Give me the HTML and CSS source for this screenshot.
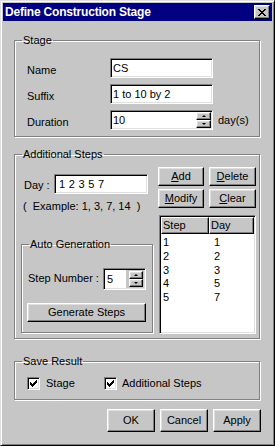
FILE: index.html
```html
<!DOCTYPE html>
<html>
<head>
<meta charset="utf-8">
<title>Define Construction Stage</title>
<link rel="stylesheet" href="styles.css">
</head>
<body>
<div class="window">
  <div class="titlebar">
    <span class="title">Define Construction Stage</span>
    <span class="close-btn raised">
      <svg width="8" height="7" viewBox="0 0 8 7" shape-rendering="crispEdges"><path fill="#000" d="M0 0h2v1H0zM6 0h2v1H6zM1 1h2v1H1zM5 1h2v1H5zM2 2h4v1H2zM3 3h2v1H3zM2 4h4v1H2zM1 5h2v1H1zM5 5h2v1H5zM0 6h2v1H0zM6 6h2v1H6z"/></svg>
    </span>
  </div>
  <div class="content">
    <fieldset class="group">
      <legend>Stage</legend>
      <div class="stage-body">
        <span class="lbl">Name</span>
        <div class="edit"><span class="txt">CS</span></div>
        <span></span>
        <span class="lbl">Suffix</span>
        <div class="edit"><span class="txt">1 to 10 by 2</span></div>
        <span></span>
        <span class="lbl">Duration</span>
        <div class="edit"><span class="txt">10</span>
          <div class="spin"><span class="sbtn raised"><i class="up"></i></span><span class="sbtn raised"><i class="down"></i></span></div>
        </div>
        <span class="unit">day(s)</span>
      </div>
    </fieldset>

    <fieldset class="group addl">
      <legend>Additional Steps</legend>
      <div class="add-body">
        <div class="left-col">
          <div class="day-row">
            <span class="day-lbl">Day :</span>
            <div class="edit day-edit"><span class="txt wide">1 2 3 5 7</span></div>
          </div>
          <div class="example">(  Example: 1, 3, 7, 14  )</div>
          <fieldset class="group auto">
            <legend>Auto Generation</legend>
            <div class="auto-body">
              <div class="step-row">
                <span class="step-lbl">Step Number :</span>
                <div class="edit small"><span class="txt">5</span>
                  <div class="spin"><span class="sbtn raised"><i class="up"></i></span><span class="sbtn raised"><i class="down"></i></span></div>
                </div>
              </div>
              <div class="btn raised gen">Generate Steps</div>
            </div>
          </fieldset>
        </div>
        <div class="right-col">
          <div class="btn-row">
            <div class="btn raised w46"><u>A</u>dd</div>
            <div class="btn raised w47"><u>D</u>elete</div>
          </div>
          <div class="btn-row">
            <div class="btn raised w46"><u>M</u>odify</div>
            <div class="btn raised w47"><u>C</u>lear</div>
          </div>
          <div class="list">
            <div class="list-head">
              <div class="hcell c1">Step</div>
              <div class="hcell c2">Day</div>
            </div>
            <div class="rows">
              <div class="row"><span class="c1">1</span><span class="c2">1</span></div>
              <div class="row"><span class="c1">2</span><span class="c2">2</span></div>
              <div class="row"><span class="c1">3</span><span class="c2">3</span></div>
              <div class="row"><span class="c1">4</span><span class="c2">5</span></div>
              <div class="row"><span class="c1">5</span><span class="c2">7</span></div>
            </div>
          </div>
        </div>
      </div>
    </fieldset>

    <fieldset class="group save">
      <legend>Save Result</legend>
      <div class="save-body">
        <div class="cb-item first">
          <span class="check"><svg width="9" height="9" viewBox="0 0 9 9" shape-rendering="crispEdges"><path fill="#000" d="M1 3h1v3H1zM2 4h1v3H2zM3 5h1v3H3zM4 4h1v3H4zM5 3h1v3H5zM6 2h1v3H6zM7 1h1v3H7z"/></svg></span>
          <span>Stage</span>
        </div>
        <div class="cb-item">
          <span class="check"><svg width="9" height="9" viewBox="0 0 9 9" shape-rendering="crispEdges"><path fill="#000" d="M1 3h1v3H1zM2 4h1v3H2zM3 5h1v3H3zM4 4h1v3H4zM5 3h1v3H5zM6 2h1v3H6zM7 1h1v3H7z"/></svg></span>
          <span>Additional Steps</span>
        </div>
      </div>
    </fieldset>

    <div class="dlg-buttons">
      <div class="btn raised big">OK</div>
      <div class="btn raised big">Cancel</div>
      <div class="btn raised big">Apply</div>
    </div>
  </div>
</div>
</body>
</html>
```

FILE: styles.css
```css
* { box-sizing: border-box; }
html, body { margin: 0; padding: 0; }
body {
  background: #c6c6c6;
  font-family: "Liberation Sans", Arial, sans-serif;
  font-size: 11px;
  line-height: 13px;
  color: #000;
}
.window {
  width: 275px;
  height: 446px;
  border: 1px solid;
  border-color: #dfdfdf #000 #000 #dfdfdf;
  box-shadow: inset 1px 1px #fff, inset -1px -1px #808080;
  padding: 2px;
  background: #c6c6c6;
  display: flex;
  flex-direction: column;
}
.titlebar {
  height: 18px;
  background: #000080;
  display: flex;
  align-items: center;
  justify-content: space-between;
  padding: 0 2px;
}
.title {
  color: #fff;
  font-weight: bold;
  font-size: 12px;
  letter-spacing: -0.2px;
  line-height: 18px;
  white-space: nowrap;
}
.raised {
  border: 1px solid;
  border-color: #fff #000 #000 #fff;
  box-shadow: inset -1px -1px #808080, inset 1px 1px #dfdfdf;
  background: #c6c6c6;
}
.close-btn {
  width: 16px;
  height: 14px;
  display: flex;
  align-items: center;
  justify-content: center;
}
.close-btn svg { display: block; }
.content {
  flex: 1;
  padding: 13px 11px 11px 11px;
  display: flex;
  flex-direction: column;
}
fieldset.group {
  margin: 0 1px 0 0;
  padding: 0;
  min-width: 0;
  border: 1px solid #808080;
  box-shadow: inset 1px 1px #fff, 1px 1px #fff;
}
fieldset.group > legend {
  margin-left: 7px;
  padding: 0 1px;
  line-height: 13px;
}
.stage-body {
  display: grid;
  grid-template-columns: 83px 103px auto;
  grid-auto-rows: 20px;
  row-gap: 6px;
  padding: 11px 0 6px 12px;
}
.lbl { padding-top: 6px; }
.unit { padding-top: 4px; margin-left: 5px; }
.edit {
  height: 20px;
  border: 1px solid;
  border-color: #808080 #fff #fff #808080;
  box-shadow: inset 1px 1px #000, inset -1px -1px #dfdfdf;
  padding: 1px;
  background: #fff;
  display: flex;
}
.edit .txt {
  flex: 1;
  padding: 2px 0 0 1px;
  white-space: pre;
  overflow: hidden;
}
.edit .txt.wide { padding-left: 3px; letter-spacing: 0.3px; }
.spin {
  width: 15px;
  display: flex;
  flex-direction: column;
}
.sbtn {
  flex: 1;
  display: flex;
  align-items: center;
  justify-content: center;
}
.sbtn i {
  display: block;
  width: 1px;
  height: 0;
  border-left: 2px solid transparent;
  border-right: 2px solid transparent;
}
.sbtn i.up { border-bottom: 2px solid #000; }
.sbtn i.down { border-top: 2px solid #000; }

.add-body {
  display: flex;
  gap: 5px;
  padding: 0 3px 4px 6px;
  align-items: flex-start;
}
.left-col { width: 132px; flex: 0 0 132px; display: flex; flex-direction: column; }
.right-col { width: 98px; flex: 0 0 98px; display: flex; flex-direction: column; padding-top: 6px; gap: 3px; }
.day-row { margin-top: 13px; height: 20px; display: flex; }
.day-lbl { flex: 0 0 33px; padding: 5px 0 0 3px; }
.day-edit { width: 94px; }
.example { margin-top: 6px; padding-left: 2px; white-space: pre; }
fieldset.group.auto { margin: 25px 0 0 0; width: 132px; }
.auto-body { padding: 17px 5px 10px 5px; display: flex; flex-direction: column; }
.step-row { height: 22px; display: flex; padding-left: 1px; }
.step-lbl { flex: 0 0 75px; padding-top: 4px; white-space: pre; }
.edit.small {
  width: 43px;
  height: 22px;
  background: #c6c6c6;
  padding: 1px 2px 1px 1px;
}
.edit.small .txt {
  flex: 0 0 21px;
  background: #fff;
  padding: 3px 0 0 2px;
  margin-right: 3px;
}
.edit.small .spin { padding: 1px 0; }
.btn {
  height: 19px;
  display: flex;
  align-items: center;
  justify-content: center;
  white-space: nowrap;
}
.btn u { text-decoration: underline; text-underline-offset: 1px; }
.gen { margin-top: 13px; width: 119px; }
.btn-row { display: flex; gap: 5px; }
.w46 { width: 46px; }
.w47 { width: 47px; }
.list {
  margin-top: 4px;
  margin-left: 1px;
  width: 97px;
  height: 119px;
  border: 1px solid;
  border-color: #808080 #fff #fff #808080;
  box-shadow: inset 1px 1px #000, inset -1px -1px #dfdfdf;
  padding: 1px;
  background: #fff;
}
.list-head { display: flex; height: 17px; }
.hcell {
  border: 1px solid;
  border-color: #fff #000 #000 #fff;
  box-shadow: inset -1px -1px #808080;
  background: #c6c6c6;
  padding: 1px 0 0 1px;
  line-height: 13px;
}
.hcell.c1 { width: 48px; }
.hcell.c2 { flex: 1; }
.rows { padding-top: 2px; }
.row { display: flex; line-height: 13.75px; }
.row .c1 { width: 48px; padding-left: 2px; }
.row .c2 { padding-left: 5px; }

fieldset.group.addl { margin-top: 11px; }
fieldset.group.save { margin-top: 16px; }
.save-body { display: flex; align-items: center; padding: 9px 0 9px 12px; }
.cb-item { display: flex; align-items: center; gap: 5px; height: 13px; }
.cb-item.first { width: 77px; gap: 6px; }
.check {
  width: 13px;
  height: 13px;
  border: 1px solid;
  border-color: #808080 #fff #fff #808080;
  box-shadow: inset 1px 1px #000, inset -1px -1px #dfdfdf;
  padding: 1px;
  background: #fff;
  display: block;
}
.check svg { display: block; }
.dlg-buttons {
  margin-top: 9px;
  display: flex;
  justify-content: flex-end;
  gap: 5px;
}
.btn.big { width: 48px; height: 23px; }
```
